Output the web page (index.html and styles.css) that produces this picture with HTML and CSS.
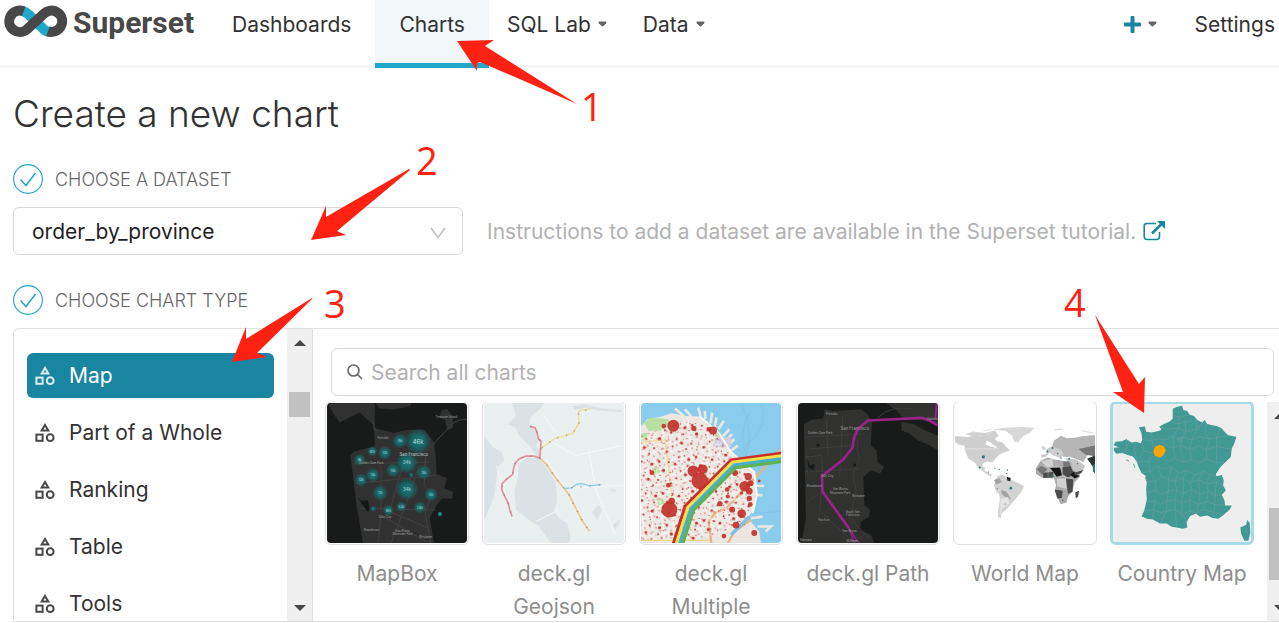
FILE: index.html
```
<!DOCTYPE html>
<html lang="en">
  <head>
    <meta charset="UTF-8" />
    <meta name="viewport" content="width=device-width, initial-scale=1.0" />
    <title>Superset</title>
    <link rel="stylesheet" href="styles.css">
  </head>
  <body>
    <svg class="defs" width="0" height="0">
      <symbol id="shapes" viewBox="0 0 20 20">
        <g fill="none" stroke="currentColor" stroke-width="2">
          <path d="M10 2 13.300 7.600H6.700Z"></path>
          <rect x="1.400" y="11.600" width="6.200" height="6.200"></rect>
          <circle cx="15.200" cy="14.700" r="3.400"></circle>
        </g>
      </symbol>
      <symbol id="check" viewBox="0 0 30 30">
        <g fill="none" stroke="currentColor">
          <circle cx="15" cy="15" r="14.4" stroke-width="1.1"></circle>
          <path d="M7.5 15.5 13 21.5 22.5 9" stroke-width="1.5"></path>
        </g>
      </symbol>
      <symbol id="caret" viewBox="0 0 9 6">
        <path d="M1 0.5H8Q9 1 8.2 2.2L5.5 5Q4.5 5.8 3.5 5L0.8 2.2Q0 1 1 0.5Z" fill="currentColor"></path>
      </symbol>
    </svg>

    <header class="navbar">
      <a class="brand" href="#">
        <svg width="64" height="34" viewBox="11 16 192 102" fill="none" stroke-width="30">
          <path d="M66 34Q76 36 84 44L128 87Q138 96 148 97" stroke="#20a7c9"></path>
          <path d="M70 35A32 32 0 1 0 81 88L131 42A32 32 0 1 1 143 95" stroke="#484848"></path>
        </svg>
        <span>Superset</span>
      </a>
      <nav class="menu">
        <a class="wide" href="#">Dashboards</a>
        <a class="wide active" href="#">Charts</a>
        <a href="#">SQL Lab <svg class="caret"><use href="#caret"></use></svg></a>
        <a href="#">Data <svg class="caret"><use href="#caret"></use></svg></a>
      </nav>
      <div class="menu right">
        <a href="#" aria-label="New">
          <svg width="17" height="17" viewBox="0 0 17 17"><path d="M6.5 1Q6.5 0 7.5 0H9.5Q10.5 0 10.5 1V6.5H16Q17 6.5 17 7.5V9.5Q17 10.5 16 10.5H10.5V16Q10.5 17 9.5 17H7.5Q6.5 17 6.5 16V10.5H1Q0 10.5 0 9.5V7.5Q0 6.5 1 6.5H6.5Z" fill="#1a85a0"></path></svg>
          <svg class="caret"><use href="#caret"></use></svg>
        </a>
        <a href="#">Settings</a>
      </div>
    </header>

    <main>
      <h1>Create a new chart</h1>

      <div class="step">
        <svg class="check"><use href="#check"></use></svg>
        <label for="dataset">CHOOSE A DATASET</label>
      </div>
      <div class="dataset">
        <div class="select">
          <select id="dataset">
            <option>order_by_province</option>
          </select>
          <svg class="chevron" width="16" height="12" viewBox="0 0 16 12"><path d="M1 1 8 10.5 15 1" fill="none" stroke="#bfbfbf" stroke-width="1.5"></path></svg>
        </div>
        <p>
          Instructions to add a dataset are available in the Superset tutorial.
          <a href="#" aria-label="Superset tutorial">
            <svg width="22" height="20" viewBox="0 0 22 20">
              <path d="M13 2.5H4Q1.2 2.5 1.2 5V15.500Q1.200 18.500 4 18.500H13.500Q16.500 18.500 16.500 15.500V11" fill="none" stroke="#1a85a0" stroke-width="1.600"></path>
              <path d="M9 12.500 18 3.500" stroke="#1a85a0" stroke-width="2.600"></path>
              <path d="M14 0H22V8Z" fill="#1a85a0"></path>
            </svg>
          </a>
        </p>
      </div>

      <div class="step">
        <svg class="check"><use href="#check"></use></svg>
        <h2>CHOOSE CHART TYPE</h2>
      </div>
      <section class="panel">
        <div class="categories">
          <button class="selected"><svg><use href="#shapes"></use></svg>Map</button>
          <button><svg><use href="#shapes"></use></svg>Part of a Whole</button>
          <button><svg><use href="#shapes"></use></svg>Ranking</button>
          <button><svg><use href="#shapes"></use></svg>Table</button>
          <button><svg><use href="#shapes"></use></svg>Tools</button>
        </div>
        <div class="scrollbar">
          <i class="up"></i>
          <i class="thumb"></i>
          <i class="down"></i>
        </div>
        <div class="charts">
          <div class="search">
            <svg width="16" height="16" viewBox="0 0 16 16" fill="none" stroke="#666" stroke-width="1.600"><circle cx="6.500" cy="6.500" r="5.500"></circle><path d="M10.500 10.500 15 15"></path></svg>
            <input type="text" placeholder="Search all charts" aria-label="Search all charts" />
          </div>
          <div class="results">
            <div class="gallery">
              <button class="chart">
                <svg class="thumbnail" viewBox="21 21 424 424">
                  <defs>
                    <radialGradient id="glow">
                      <stop offset="0" stop-color="#168080"></stop>
                      <stop offset=".5" stop-color="#146e6f" stop-opacity=".85"></stop>
                      <stop offset="1" stop-color="#146e6f" stop-opacity="0"></stop>
                    </radialGradient>
                  </defs>
                  <path fill="#191b1a" d="M21 21H445V445H21Z"></path>
                  <g fill="#313131">
                    <path d="M22 21H160V65L168 98 225 112 260 103 315 102 345 140 350 180 353 235 385 250 375 280 403 290 400 310 368 310 350 335 332 370 345 445H130L112 340 92 180 105 165 165 150 163 90 120 50 60 80 45 60Z"></path>
                    <path d="M368 42 385 40 400 58 404 95 386 104 378 72 362 64Z"></path>
                    <path d="M168 21H275V30L225 40 180 38Z"></path>
                  </g>
                  <path d="M163 100 165 152 105 168 60 80 120 50 160 90Z" fill="#191b1a"></path>
                  <path d="M163 21V100L175 105M445 70Q410 70 393 92L320 170 315 270 338 300 318 350 335 445M185 210V350L177 445M100 205 330 200M110 265 350 240M125 340 350 345M200 370 320 440M250 210 210 350 330 400M300 210 260 330 215 445" fill="none" stroke="#424242" stroke-width="3"></path>
                  <path d="M115 305 125 318 145 315 150 340 145 352 128 330Z" fill="#151716"></path>
                  <g fill="url(#glow)">
                    <circle cx="297" cy="137" r="40"></circle><circle cx="263" cy="202" r="34"></circle>
                    <circle cx="263" cy="282" r="35"></circle><circle cx="242" cy="136" r="23"></circle>
                    <circle cx="196" cy="172" r="21"></circle><circle cx="158" cy="167" r="16"></circle>
                    <circle cx="120" cy="193" r="18"></circle><circle cx="160" cy="239" r="22"></circle>
                    <circle cx="124" cy="254" r="20"></circle><circle cx="221" cy="225" r="22"></circle>
                    <circle cx="314" cy="231" r="23"></circle><circle cx="182" cy="293" r="24"></circle>
                    <circle cx="336" cy="298" r="21"></circle><circle cx="302" cy="337" r="19"></circle>
                    <circle cx="246" cy="335" r="16"></circle><circle cx="207" cy="346" r="17"></circle>
                    <circle cx="161" cy="341" r="9"></circle><circle cx="276" cy="239" r="8"></circle>
                  </g>
                  <circle cx="363" cy="357" r="6" fill="#16908f"></circle>
                  <g class="map-text">
                    <text class="big" x="297" y="144">46k</text><text class="mid" x="263" y="207">24k</text>
                    <text class="mid" x="263" y="288">34k</text><text class="mid" x="284" y="181">San Francisco</text>
                    <text x="242" y="140">15k</text><text x="196" y="176">12k</text><text x="158" y="171">67k</text>
                    <text x="120" y="197">9k</text><text x="160" y="243">13k</text><text x="124" y="258">12k</text>
                    <text x="221" y="229">12k</text><text x="314" y="235">13k</text><text x="182" y="297">17k</text>
                    <text x="336" y="302">14k</text><text x="302" y="341">2.9k</text><text x="246" y="338">3.3k</text><text x="207" y="350">60k</text>
                  </g>
                  <g class="map-text dim">
                    <text x="190" y="130">Presidio</text><text x="155" y="205">Golden Gate Park</text>
                    <text x="197" y="368">Daly City</text><text x="156" y="408">Broadmoor</text>
                    <text x="250" y="412">San Bruno</text><text x="250" y="422">Mountain Park</text>
                    <text x="320" y="431">Brisbane</text><text x="382" y="65">Treasure Island</text>
                  </g>
                </svg>
                <span>MapBox</span>
              </button>

              <button class="chart">
                <svg class="thumbnail" viewBox="23 21 424 424" fill="none">
                  <path fill="#eaf0f0" d="M23 21H447V445H23Z"></path>
                  <g fill="#dae2e5">
                    <path d="M23 120 50 155 75 168 85 195 65 215 55 300 35 350 23 380Z"></path>
                    <path d="M108 21H205L190 42 168 58 160 80 185 100 190 130 180 152 198 178 185 184 160 150 130 120 118 95 95 85 120 60Z"></path>
                    <path d="M128 205 155 185 190 190 215 222 240 260 245 320 235 345 250 370 275 385 285 425 280 445H225L190 395 160 375 120 345 115 290 125 250Z"></path>
                    <path d="M290 30 330 25 380 38 440 42V48L370 44 330 36 300 42ZM350 350 370 330 380 345 365 375ZM415 390 437 372 430 392 418 405ZM400 280 425 285 418 292Z"></path>
                  </g>
                  <path d="M210 190 270 280 445 270M180 380 250 345M340 160 360 280 420 420M60 210 90 300M230 140 300 180 440 150M205 60 240 110" stroke="#f7f9f9" stroke-width="3"></path>
                  <path d="M198 157 238 128 265 121 292 113 311 80 309 48 320 42 346 40" stroke="#efdc94" stroke-width="4"></path>
                  <path d="M192 188 213 208 226 228 243 252 260 273 280 298 296 330 318 373 342 409" stroke="#edc58d" stroke-width="5"></path>
                  <path d="M267 280 287 278 305 267 320 265 343 272 378 268" stroke="#8bcce3" stroke-width="4"></path>
                  <path d="M162 92 178 96 184 112 188 130 196 137 192 188 175 182 150 182 130 190 117 204 112 222 110 237 90 253 78 265 77 284 85 302 96 324 102 347 108 365" stroke="#e09298" stroke-width="5"></path>
                  <path d="M162 92 178 96 184 112 188 130 196 137 192 188 175 182 150 182 130 190 117 204 112 222 110 237 90 253 78 265 77 284 85 302 96 324 102 347 108 365M198 157 238 128 265 121 292 113 311 80 309 48 346 40M213 208 226 228 243 252 260 273 280 298 296 330 318 373 342 409M287 278 364 271 378 268" stroke="#8c7d89" stroke-opacity=".6" stroke-width="5" stroke-dasharray="4 24"></path>
                </svg>
                <span>deck.gl Geojson</span>
              </button>

              <button class="chart">
                <svg class="thumbnail" viewBox="27 21 424 424">
                  <defs>
                    <pattern id="dots" width="113" height="97" patternUnits="userSpaceOnUse" patternTransform="rotate(-7)">
                      <path d="M0 12H113M0 35H113M0 58H113M0 80H113M14 0V97M45 0V97M78 0V97M100 0V97" stroke="#fff" stroke-opacity=".6" stroke-width="3"></path>
                      <g fill="#c4362f">
                        <circle cx="5" cy="7" r="3"></circle><circle cx="22" cy="5" r="2"></circle><circle cx="34" cy="18" r="5"></circle>
                        <circle cx="51" cy="8" r="2"></circle><circle cx="57" cy="13" r="4"></circle><circle cx="12" cy="29" r="2"></circle>
                        <circle cx="27" cy="37" r="3"></circle><circle cx="45" cy="28" r="2"></circle><circle cx="67" cy="41" r="5"></circle>
                        <circle cx="5" cy="49" r="3"></circle><circle cx="18" cy="62" r="5"></circle><circle cx="36" cy="51" r="2"></circle>
                        <circle cx="47" cy="68" r="3"></circle><circle cx="78" cy="57" r="2"></circle><circle cx="30" cy="82" r="3"></circle>
                        <circle cx="86" cy="18" r="3"></circle><circle cx="104" cy="27" r="4"></circle><circle cx="94" cy="47" r="2"></circle>
                        <circle cx="103" cy="69" r="3"></circle><circle cx="84" cy="83" r="4"></circle><circle cx="62" cy="88" r="2"></circle>
                        <circle cx="10" cy="87" r="2"></circle><circle cx="70" cy="73" r="2"></circle>
                      </g>
                    </pattern>
                    <pattern id="dots-fine" width="47" height="53" patternUnits="userSpaceOnUse" patternTransform="rotate(11)">
                      <path d="M4 5h4v4h-4zM19 12h3v5h-3zM33 6h5v3h-5zM8 27h3v3h-3zM26 30h5v4h-5zM40 24h3v5h-3zM14 44h5v3h-5zM35 45h3v3h-3z" fill="#c4362f" opacity=".75"></path>
                    </pattern>
                  </defs>
                  <path fill="#8accec" d="M27 21H451V445H27Z"></path>
                  <path d="M330 21Q370 100 345 180Q320 120 355 50M390 21Q430 100 300 180M360 355 451 350" fill="none" stroke="#7fc1e2" stroke-width="2"></path>
                  <path d="M27 92 45 70 80 64 120 52 165 60 205 62 235 82 262 110 285 140 300 170 340 205 370 230 375 290 370 340 350 370 385 410 390 445H27Z" fill="#ece7e2"></path>
                  <path d="M130 38 158 62M160 40 180 62M200 35 208 62M220 45 222 70M242 50 238 82M256 65 250 95M278 75 262 100M295 100 275 122M303 115 285 135M310 130 292 148M320 150 300 165M374 272H400M374 300H395M360 370 395 365M380 395H420L405 410" fill="none" stroke="#ece7e2" stroke-width="8"></path>
                  <path d="M35 80 60 65 110 70 115 90 85 105 50 105ZM27 115 45 110V130L27 138ZM60 220 80 215 85 230 65 238ZM75 315 95 310 100 325 80 332ZM250 110 265 108 268 122 252 125Z" fill="#b6dfa0"></path>
                  <path d="M250 125H300V155H250Z" fill="#d4cede"></path>
                  <path d="M27 140 100 132 118 290 120 350M27 437H235" fill="none" stroke="#f3d48c" stroke-width="4"></path>
                  <path d="M240 445 232 380 250 355 290 335 375 245 451 160M290 445 310 410 360 375" fill="none" stroke="#e7b387" stroke-width="7"></path>
                  <path d="M205 62 262 110 300 170 370 230 378 300 365 355" fill="none" stroke="#fafafa" stroke-width="6"></path>
                  <path d="M27 120 120 90 165 66 230 95 275 145 300 185 350 230 365 330 340 390 270 410 200 435H27Z" fill="url(#dots)"></path>
                  <path d="M27 120 120 90 165 66 230 95 275 145 300 185 350 230 365 330 340 390 270 410 200 435H27Z" fill="url(#dots-fine)"></path>
                  <path d="M300 420 355 365" stroke="#79c3e6" stroke-width="10"></path>
                  <g fill="#c22f28" fill-opacity=".9">
                    <circle cx="125" cy="90" r="18"></circle><circle cx="96" cy="91" r="7"></circle>
                    <circle cx="245" cy="104" r="12"></circle><circle cx="233" cy="101" r="7"></circle>
                    <circle cx="185" cy="227" r="17"></circle><circle cx="214" cy="222" r="15"></circle>
                    <circle cx="205" cy="257" r="25"></circle><circle cx="113" cy="344" r="24"></circle>
                    <circle cx="120" cy="318" r="10"></circle><circle cx="312" cy="233" r="9"></circle>
                    <circle cx="352" cy="244" r="11"></circle><circle cx="341" cy="273" r="16"></circle>
                    <circle cx="355" cy="288" r="10"></circle><circle cx="359" cy="264" r="9"></circle>
                    <circle cx="355" cy="310" r="8"></circle><circle cx="332" cy="356" r="13"></circle>
                    <circle cx="303" cy="344" r="9"></circle><circle cx="315" cy="391" r="10"></circle>
                    <circle cx="370" cy="415" r="9"></circle><circle cx="278" cy="424" r="7"></circle>
                    <circle cx="266" cy="326" r="8"></circle><circle cx="288" cy="283" r="7"></circle>
                    <circle cx="110" cy="270" r="7"></circle><circle cx="60" cy="232" r="7"></circle>
                    <circle cx="290" cy="304" r="6"></circle><circle cx="358" cy="328" r="7"></circle>
                    <circle cx="187" cy="98" r="8"></circle><circle cx="385" cy="257" r="4"></circle>
                  </g>
                  <g fill="none" stroke-width="10">
                    <path d="M124 451 161 333 300 194 455 173" stroke="#c9302b"></path>
                    <path d="M133 451 169 337 304 201 455 181" stroke="#fadf47"></path>
                    <path d="M143 451 178 341 309 209 455 190" stroke="#47aecd"></path>
                    <path d="M152 451 186 345 313 217 455 198" stroke="#5fb355"></path>
                  </g>
                </svg>
                <span>deck.gl Multiple</span>
              </button>

              <button class="chart">
                <svg class="thumbnail" viewBox="24 21 424 424">
                  <path fill="#191b1a" d="M24 21H448V445H24Z"></path>
                  <g fill="#313130">
                    <path d="M42 85 65 72 100 68 105 40 130 45 180 42 215 40 235 55 248 80 245 150 262 165 265 200 285 215 272 235 245 225 222 245 225 330 242 345 240 365 215 380 210 405 245 420 255 445H35L48 370Z"></path>
                    <path d="M290 21H448V88L410 75 370 70 340 65 325 45ZM337 78 375 85 400 100 448 120V165L415 145 390 135 360 112 338 105Z"></path>
                  </g>
                  <path d="M42 125 215 115M60 160 190 150M45 230 210 220M45 185 95 180 100 245M225 80Q190 150 210 190L190 235 200 290 180 370 240 430M95 290 90 345 140 395 190 440M50 320 95 290M110 75 115 180M160 60 150 240M265 65Q310 25 370 40" fill="none" stroke="#3e3e3e" stroke-width="3"></path>
                  <path d="M52 190 60 210 75 205 70 225 55 215Z" fill="#181a19"></path>
                  <path d="M80 145h9v8h-9zM192 205h8v8h-8z" fill="#181a19"></path>
                  <path d="M447 89Q420 72 400 66L236 74 208 97Q193 116 190 155L161 192 97 242 98 289 178 400" fill="none" stroke="#9b2289" stroke-width="8"></path>
                  <path d="M178 400 195 445M178 400 208 445" fill="none" stroke="#9b2289" stroke-width="4"></path>
                  <path d="M440 70 444 21" fill="none" stroke="#9b2289" stroke-width="6"></path>
                  <g class="map-text dim">
                    <text class="mid" x="196" y="103">San Francisco</text><text x="126" y="58">Presidio</text><text x="91" y="114">Golden Gate Park</text>
                    <text x="112" y="246">Daly City</text><text x="74" y="276">Broadmoor</text><text x="152" y="286">San Bruno</text>
                    <text x="152" y="298">Mountain Park</text><text x="207" y="306">Brisbane</text><text x="190" y="354">South San</text>
                    <text x="190" y="364">Francisco</text><text x="102" y="378">Pacifica</text><text x="180" y="412">San Bruno</text>
                    <text x="48" y="438">Montara</text><text x="188" y="443">Millbrae</text><text x="432" y="74">Oakland</text>
                  </g>
                </svg>
                <span>deck.gl Path</span>
              </button>

              <button class="chart">
                <svg class="thumbnail" viewBox="24 21 424 424">
                  <g fill="#cfcfcf">
                    <path d="M24 121 60 124 88 120 112 124 122 132 116 146 128 152 150 157 154 136 167 140 178 152 190 164 170 172 158 178 146 190 138 201 120 198 108 204 106 214 117 216 112 224 124 232 136 238 132 244 116 234 96 218 84 202 64 188 56 170 52 150 38 148 24 140Z"></path>
                    <path d="M55 115 80 108 115 112 145 104 156 120 145 130 165 152 150 154 130 140 115 132 100 120 75 122Z"></path>
                    <path d="M140 101 170 96 230 94 265 97 250 112 232 120 215 140 205 139 195 118 178 106Z" fill="#d8d8d8"></path>
                    <path d="M152 242 170 238 192 252 218 265 233 273 224 292 202 318 190 332 178 345 166 355 162 370 154 366 155 342 160 315 158 298 148 288 142 270Z" fill="#d2d2d2"></path>
                  </g>
                  <path d="M58 160H155M75 108 100 112M110 106 135 100M120 116 135 110" stroke="#e2e2e2" stroke-width="3"></path>
                  <path d="M164 284 180 290 194 313 176 306 165 296ZM142 254 158 248 166 260 150 268Z" fill="#a4a4a4"></path>
                  <path d="M162 310 185 306 188 326 168 340 160 365Z" fill="#e4e4e4"></path>
                  <path d="M181 244 193 248 191 258 182 256Z" fill="#292929"></path>
                  <g fill="#b5b5b5">
                    <path d="M318 152 324 135 345 120 362 128 385 126 410 122 448 118V165L425 180 412 200 398 194 372 184 352 184 344 170Z"></path>
                    <path d="M285 178 300 176 302 160 318 152 345 162 354 178 344 188 322 180 310 172 300 184 285 186ZM288 150 296 155 300 162 288 162Z" fill="#cacaca"></path>
                    <path d="M408 104 440 112M325 102 352 100" stroke="#dedede" stroke-width="4"></path>
                  </g>
                  <path d="M398 160 448 150V182L420 178Z" fill="#777"></path>
                  <path d="M358 188 392 192 418 212 412 226 388 236 376 214Z" fill="#c4c4c4"></path>
                  <path d="M424 190 448 180V225L436 206Z" fill="#2d3436"></path>
                  <path d="M284 195 305 186 324 192 350 196 374 200 382 225 402 234 402 244 386 262 380 290 366 304 362 322 344 328 334 306 326 290 330 270 324 250 290 248 270 236 268 220Z" fill="#aaa"></path>
                  <g fill="#d2d2d2">
                    <path d="M284 197 320 190 322 212 302 215ZM332 250 360 250 362 280 334 275Z"></path>
                  </g>
                  <g fill="#4b4b4b">
                    <path d="M350 215 374 212 386 240 365 246 350 236ZM360 250 382 252 380 290 366 296ZM290 232 322 230 322 246 292 248ZM326 284 350 286 348 308 334 310ZM388 292 400 286 397 304 390 310Z"></path>
                    <path d="M352 198 370 198 374 212 352 215ZM272 222 286 210 304 222 288 238Z" fill="#777"></path>
                    <path d="M312 218 342 216 348 240 332 244 322 230ZM374 238 384 228 392 238 402 242 386 250Z" fill="#161616"></path>
                    <path d="M385 232 413 224 406 234 388 240Z"></path>
                  </g>
                  <path d="M285 212 350 215M330 190V215M306 215V245M346 240 365 250M362 280 345 285M300 182 330 165 350 175M310 150 330 180" fill="none" stroke="#e4e4e4" stroke-width="1"></path>
                  <g fill="#307780">
                    <circle cx="110" cy="184" r="5"></circle><circle cx="193" cy="279" r="4"></circle><circle cx="99" cy="216" r="3"></circle>
                    <circle cx="125" cy="230" r="2"></circle><circle cx="145" cy="218" r="2"></circle><circle cx="158" cy="222" r="2"></circle>
                    <circle cx="180" cy="235" r="2"></circle><circle cx="183" cy="224" r="2"></circle><circle cx="152" cy="281" r="2"></circle>
                    <circle cx="176" cy="327" r="2"></circle><circle cx="319" cy="157" r="3"></circle><circle cx="304" cy="168" r="3"></circle>
                    <circle cx="335" cy="174" r="2"></circle><circle cx="345" cy="188" r="2"></circle><circle cx="318" cy="240" r="3"></circle>
                    <circle cx="370" cy="190" r="3"></circle><circle cx="350" cy="316" r="2"></circle><circle cx="395" cy="205" r="2"></circle>
                    <path d="M441 210 448 204V235L442 228Z"></path>
                  </g>
                </svg>
                <span>World Map</span>
              </button>

              <button class="chart picked">
                <svg class="thumbnail" viewBox="188 372 416 416">
                  <path fill="#eee" d="M188 372H604V788H188Z"></path>
                  <path d="M368 386 382 380 396 377 400 390 412 393 418 404 432 408 442 420 458 428 464 420 472 432 488 436 500 438 514 444 524 456 535 466 560 471 554 490 546 506 543 532 528 546 512 562 498 584 500 590 516 586 522 602 520 618 528 632 516 646 524 662 526 678 546 678 540 690 522 706 506 718 488 716 472 708 450 712 438 702 420 710 410 728 412 744 398 748 380 744 364 742 350 732 330 732 308 720 290 718 274 710 282 694 290 660 288 630 290 606 286 588 274 580 264 560 260 546 248 530 232 526 216 520 198 522 190 512 192 504 206 502 190 496 196 486 214 484 228 478 244 488 258 486 272 490 276 480 274 460 266 442 284 440 288 456 304 458 322 454 334 450 328 440 342 432 360 424 368 416Z" fill="#419995"></path>
                  <path d="M592 722 600 730 602 760 596 784 584 784 574 762 572 744 590 736Z" fill="#419995"></path>
                  <path d="M368 405 388 412 418 404M360 424 385 432 405 425 440 422M328 440 355 448 385 445 408 455 440 448 464 420M276 480 305 482 330 476 348 480 370 468 385 480 400 472 425 480 450 470 480 478 515 470 535 466M228 478 230 500 225 520M258 486 252 510 260 546M276 490 282 515 270 530M282 515 315 520M345 495 370 505 390 495 420 510 445 498 470 510 500 500 545 508M260 546 295 545 305 530 330 532 355 545 375 535 400 548 425 540 445 550 470 538 500 550 528 546M274 580 300 575 320 560 345 568 365 560 385 580 410 572 435 585 460 575 480 585 500 590M290 606 318 605 335 590 355 600 375 605 400 595 420 610 445 600 470 612 500 608 520 618M290 640 315 632 335 645 355 635 380 632 400 642 425 630 450 645 475 635 495 648 516 646M288 670 315 662 330 675 350 665 375 660 395 670 420 662 445 675 470 665 495 675 526 678M282 695 310 690 330 700 350 695 375 690 395 705 420 695 440 702 460 690 490 698 520 706M388 412 385 445 370 468 370 505 375 535M405 425 408 455 400 472 390 495 400 548M440 422 440 448 425 480 420 510 425 540M305 458 305 482 315 520M330 476 345 495M470 432 465 460 480 478 470 510 470 538M510 445 500 475 500 500 500 550M295 545 300 575 318 605 315 632M320 560 335 590M365 560 355 600 355 635 350 665 350 695 330 732M385 580 375 605 380 632 375 660 375 690 380 744M410 572 400 595 400 642 395 670 395 705 412 725M435 585 420 610 425 630 420 662 420 710M460 575 445 600 450 645 445 675 440 702M480 585 470 612 475 635 470 665 460 690M505 600 500 608 495 648 495 675 490 715M315 662 310 690 308 720M590 736 590 760 600 765" fill="none" stroke="#699f9c" stroke-width="2"></path>
                  <circle cx="389" cy="478" r="6" fill="none" stroke="#699f9c" stroke-width="2"></circle>
                  <path d="M316 500 328 495 342 500 347 512 340 526 330 533 314 528 310 514Z" fill="#ffa500"></path>
                  <path d="M228 540 236 544M250 552 254 564M285 592 290 606" stroke="#6c9a98" stroke-width="3"></path>
                </svg>
                <span>Country Map</span>
              </button>
            </div>
            <div class="scrollbar">
              <i class="up"></i>
              <i class="thumb"></i>
              <i class="down"></i>
            </div>
          </div>
        </div>
      </section>
    </main>

    <svg class="notes" width="1279" height="623" viewBox="0 0 1279 623">
      <path d="M457 41 494 40 485 46 577 104 480 62 477 63 477 71Z"></path>
      <path d="M311 240 326 206 326 217 409 169 410 170 337 231 346 235Z"></path>
      <path d="M232 362 246 327 246 339 312 298 312 299 257 353 267 357Z"></path>
      <path d="M1095 315 1139 384 1145 377 1144 413 1113 392 1123 392Z"></path>
      <text x="581" y="121">1</text>
      <text x="416" y="175">2</text>
      <text x="324" y="318">3</text>
      <text x="1064" y="317">4</text>
    </svg>
  </body>
</html>
```
FILE: styles.css
```
* {
  box-sizing: border-box;
}
html,
body {
  height: 100%;
  margin: 0;
}
body {
  display: flex;
  flex-direction: column;
  position: relative;
  overflow: hidden;
  padding-bottom: 1px;
  background: #fff;
  color: #323232;
  font-family: Inter, sans-serif;
  font-size: 21px;
  font-weight: 400;
  line-height: 33px;
}
a {
  color: inherit;
  text-decoration: none;
}
button,
input,
select {
  font: inherit;
  color: inherit;
}
svg {
  flex: none;
}
.defs {
  position: absolute;
}

/* top bar */
.navbar {
  display: flex;
  flex: none;
  height: 68px;
  padding-left: 4px;
  border-bottom: 3px solid #f7f7f7;
}
.brand {
  display: flex;
  width: 204px;
  height: 44px;
  align-items: center;
  gap: 5px;
  color: #484848;
  font-family: Roboto, sans-serif;
  font-size: 30px;
  font-weight: 700;
}
.menu {
  display: flex;
}
.menu a {
  display: flex;
  height: 68px;
  padding: 0 18px 20px;
  align-items: center;
  gap: 7px;
}
.menu .wide {
  padding: 0 24px 20px;
}
.menu .active {
  padding-bottom: 15px;
  border-bottom: 5px solid #20a7c9;
  background: #f2f7fa;
}
.menu.right {
  margin-left: auto;
}
.menu.right a:last-child {
  padding-left: 20px;
  padding-right: 4px;
}
.caret {
  width: 9px;
  height: 6px;
  color: #666;
}

/* form */
main {
  display: flex;
  flex: 1;
  flex-direction: column;
  min-height: 0;
  padding-left: 13px;
}
h1 {
  margin: 22px 0 26px;
  font-size: 37px;
  font-weight: 300;
  line-height: 48px;
}
.step {
  display: flex;
  height: 30px;
  align-items: center;
  gap: 12px;
  color: #666;
}
.step label,
.step h2 {
  margin: 0;
  font-size: 18px;
  font-weight: 300;
}
.check {
  width: 30px;
  height: 30px;
  color: #20a7c9;
}
.dataset {
  display: flex;
  align-items: center;
  gap: 24px;
  margin: 13px 0 30px;
}
.dataset p {
  display: flex;
  align-items: center;
  gap: 7px;
  margin: 0;
  color: #b2b2b2;
}
.dataset p a {
  display: flex;
}
.select {
  position: relative;
}
.select select {
  display: block;
  width: 450px;
  height: 48px;
  padding: 0 18px;
  border: 1px solid #d9d9d9;
  border-radius: 6px;
  appearance: none;
  background: #fff;
  color: #1f1f1f;
}
.chevron {
  position: absolute;
  top: 20px;
  right: 17px;
  pointer-events: none;
}

/* chart picker */
.panel {
  display: flex;
  flex: 1;
  min-height: 0;
  margin-top: 13px;
  border: 1px solid #e0e0e0;
  border-right: 0;
  border-radius: 6px 0 0 0;
}
.categories {
  display: flex;
  flex: none;
  flex-direction: column;
  width: 273px;
  padding: 24px 13px 0;
  gap: 12px;
  overflow: hidden;
}
.categories button {
  display: flex;
  flex: none;
  height: 45px;
  padding: 0 8px;
  align-items: center;
  gap: 14px;
  border: 0;
  border-radius: 6px;
  background: none;
}
.categories svg {
  width: 20px;
  height: 20px;
  color: #484848;
}
.categories .selected {
  background: #1a85a0;
  color: #fff;
}
.categories .selected svg {
  color: #d8eef3;
}
.scrollbar {
  display: flex;
  flex: none;
  flex-direction: column;
  width: 26px;
  padding: 11px 2px 10px;
  align-items: center;
  border-right: 1px solid #e0e0e0;
  background: #f0f0f0;
}
.up,
.down {
  border: 6px solid transparent;
  border-top-width: 0;
  border-bottom: 6px solid #484848;
}
.down {
  margin-top: auto;
  border-top: 6px solid #484848;
  border-bottom-width: 0;
}
.thumb {
  width: 21px;
  height: 25px;
  margin-top: 46px;
  background: #c1c1c1;
}
.charts {
  display: flex;
  flex: 1;
  flex-direction: column;
  min-width: 0;
  padding: 19px 0 0 12px;
}
.search {
  display: flex;
  flex: none;
  height: 48px;
  margin: 0 5px 6px 6px;
  padding: 0 15px;
  align-items: center;
  gap: 8px;
  border: 1px solid #d9dbe4;
  border-radius: 6px;
}
.search input {
  flex: 1;
  padding: 0;
  border: 0;
  outline: 0;
  background: none;
}
.search input::placeholder {
  color: #b2b2b2;
}
.results {
  display: flex;
  flex: 1;
  min-height: 0;
  overflow: hidden;
}
.results .scrollbar {
  margin-right: -14px;
}
.results .thumb {
  height: 72px;
  margin-top: 89px;
}
.gallery {
  display: grid;
  flex: 1;
  grid-template-columns: repeat(auto-fill, 144px);
  align-content: start;
  gap: 13px;
  margin-top: -1px;
}
.chart {
  display: flex;
  flex-direction: column;
  padding: 0;
  gap: 12px;
  border: 0;
  background: none;
  color: #8e8e8e;
}
.thumbnail {
  display: block;
  width: 144px;
  height: 144px;
  padding: 1px;
  border: 1px solid #e0e0e0;
  border-radius: 6px;
}
.chart span {
  width: 100%;
  padding: 0 4px;
}
.picked .thumbnail {
  padding: 0;
  border: 3px solid #a5dbe9;
}
.map-text {
  fill: #c5d5d5;
  font-size: 9px;
  text-anchor: middle;
}
.map-text .mid {
  font-size: 13px;
}
.map-text .big {
  font-size: 18px;
}
.dim {
  fill: #a0a0a0;
}

/* numbered arrows on top of the page */
.notes {
  position: absolute;
  top: 0;
  left: 0;
  fill: #ff2112;
  font-family: "Open Sans", sans-serif;
  font-size: 38px;
  pointer-events: none;
}
```
